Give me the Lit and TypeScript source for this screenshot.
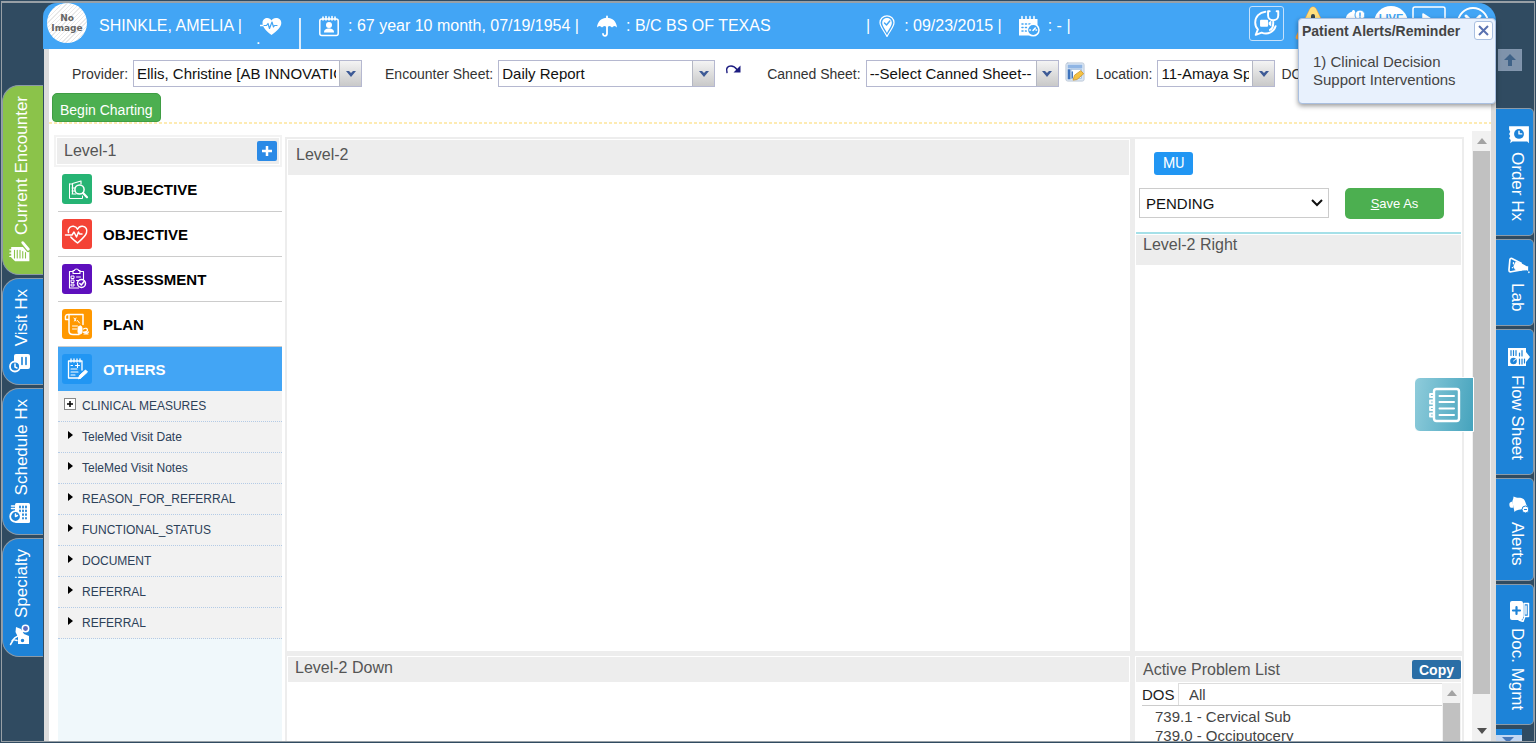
import { LitElement, html, css, svg, type TemplateResult } from "lit";
import { customElement, state } from "lit/decorators.js";
import { classMap } from "lit/directives/class-map.js";

const icon = (size: number, box: number, body: unknown) => html`
  <svg width=${size} height=${size} viewBox="0 0 ${box} ${box}" fill="none" stroke="currentColor"
    stroke-width="1.5" stroke-linecap="round" stroke-linejoin="round" aria-hidden="true">${body}</svg>`;

const ICONS: Record<string, TemplateResult> = {
  heart: icon(22, 22, svg`
    <path d="M11.500 20 C6 16 2.500 12 2.500 8 C2.500 4.800 4.800 3 7.300 3 C9.200 3 10.700 4 11.500 5.500 C12.300 4 13.800 3 16 3 C19 3 21.300 4.800 21.300 8 C21.300 12 17 16 11.500 20Z" fill="currentColor" stroke="none"/>
    <path d="M2.500 10.500 H6.500 L8 8.500 L9.500 13.500 L12 7 L13.500 12 L14.500 10.500 H17" stroke="#42a5f5" stroke-width="1.200"/>
    <path d="M0 10.500H3" stroke-width="1.300"/>`),
  person: icon(22, 22, svg`
    <rect x="1.800" y="4" width="18.400" height="16.600" rx="2"/>
    <path d="M5 2v3M8 1.500v3.500M11 2v3M14 1.500v3.500M17 2v3" stroke-width="1.600"/>
    <circle cx="11" cy="10" r="3" fill="currentColor" stroke="none"/>
    <path d="M6 17.500c0-3 2-4 5-4s5 1 5 4z" fill="currentColor" stroke="none"/>`),
  umbrella: icon(22, 22, svg`
    <path d="M1 12.500 C1.500 6.500 5.500 2.800 11 2.800 C16.500 2.800 20.500 6.500 21 12.500 C19.500 10.500 17.500 10.500 16 12.500 C14.500 10.500 12.500 10.500 11 12.500 C9.500 10.500 7.500 10.500 6 12.500 C4.500 10.500 2.500 10.500 1 12.500Z" fill="currentColor" stroke="none"/>
    <path d="M11 1.500V18.500c0 3-4 3-4 .3" stroke-width="1.800"/>`),
  pin: icon(22, 22, svg`
    <path d="M11 21.500 C8 15.500 4 12 4 7.600 C4 3.800 7.200 .8 11 .8 C14.800 .8 18 3.800 18 7.600 C18 12 14 15.500 11 21.500Z" stroke-width="1.200"/>
    <path d="M11 18 C9 13.500 6.200 11 6.200 7.700 C6.200 5 8.400 3 11 3 C13.600 3 15.800 5 15.800 7.700 C15.800 11 13 13.500 11 18Z" fill="currentColor" stroke="none"/>
    <path d="M8.500 8l2 2L13.800 6" stroke="#42a5f5" stroke-width="1.400"/>`),
  calendar: icon(22, 22, svg`
    <path d="M1 4h18.500v6H12v10.500H1z" fill="currentColor" stroke="none"/>
    <path d="M4 1.500v3M8 1.500v3M12 1.500v3M16 1.500v3"/>
    <path d="M4 9h1M7.500 9h1M11 9h1M4 12.500h1M7.500 12.500h1M4 16h1M7.500 16h1" stroke="#42a5f5" stroke-width="1.600"/>
    <circle cx="15.200" cy="15" r="5.800" fill="#42a5f5"/>
    <path d="M15 15.500l2.300-2.500M11.800 15h.6M18 15h.6"/>`),
  steth: icon(30, 28, svg`
    <path d="M12.500 3.500 C7 4 3 8 3 13.500 C3 16 4 18.500 5.500 20 L3.500 25 L9 23 C15 25.500 20.500 22 22 17" stroke-width="1.800"/>
    <path d="M16.500 3h-1.500v4c0 6 9.500 6 9.500 0v-4h-1.500M19.800 12v2.500c0 3-1 5-3 6" stroke-width="1.800"/>
    <rect x="7.500" y="11" width="7.500" height="6.500" rx="1" fill="currentColor" stroke="none"/>
    <path d="M15.500 13.500l2.500-1.800v5.600l-2.500-1.800z" fill="currentColor" stroke="none"/>`),
  warning: icon(36, 36, svg`
    <path d="M18 1.500 C19.500 1.500 20.500 2.500 21.500 4 L35 31 C36 33 35 34.500 33 34.500 H3 C1 34.500 0 33 1 31 L14.500 4 C15.500 2.500 16.500 1.500 18 1.500Z" fill="#f7a23b" stroke="none"/>
    <path d="M18 2 C19.500 2 20.500 3 21 4 L31 25 H5 L15 4 C15.500 3 16.500 2 18 2Z" fill="#ffdf7e" stroke="none"/>
    <path d="M18 11v10M18 27v.5" stroke="#37474f" stroke-width="4"/>`),
  bell: icon(24, 24, svg`
    <path d="M1 18c3.500-2 2-7 4-10C6.500 6 8.500 5 10 4.800C10 2.500 13 2.500 13 4.800C16 6 17 9 17 12C17 14.500 18.500 16 20 18zM8 19.500h6c-.5 3-5.500 3-6 0z" fill="currentColor" stroke="none"/>
    <circle cx="18" cy="8" r="5" fill="currentColor" stroke="#42a5f5" stroke-width="1"/>
    <path d="M18 6v2.500M18 10v.2" stroke="#42a5f5"/>`),
  play: icon(34, 34, svg`<rect x="1" y="1" width="32" height="32" rx="2" stroke-width="1.500"/>
    <path d="M11 8l14 9-14 9z" fill="currentColor"/>`),
  closeRound: icon(34, 34, svg`<circle cx="17" cy="17" r="15" stroke-width="2"/>
    <path d="M10 10l14 14M24 10L10 24" stroke-width="3"/>`),
  notes: icon(22, 20, svg`
    <path d="M2 5.500h13l3.500 3v10H5.500L2 15z" fill="currentColor" stroke="none"/>
    <path d="M5 8.500v7M7.500 8.500v7M10 8.500v7M12.500 9.500v6M15 10.500v5" stroke="#8bc34a" stroke-width="1"/>
    <path d="M11.500 1l6 7" stroke="#8bc34a" stroke-width="4"/>
    <path d="M12.500 1.500l5 6" stroke-width="2.500"/>
    <path d="M.8 8h2M.8 11h2M.8 14h2" stroke-width="1.200"/>`),
  visit: icon(22, 22, svg`
    <rect x="5" y="2" width="16" height="15" rx="2" fill="currentColor" stroke="none"/>
    <path d="M13 5.500v7M17 5.500v7" stroke="#1d83d8" stroke-width="1.600"/>
    <circle cx="6" cy="14.500" r="5" fill="#1d83d8" stroke-width="1.800"/><path d="M6 12v3l2 1"/>`),
  schedule: icon(22, 22, svg`
    <rect x="6" y="1" width="15" height="20" rx="1.500" fill="currentColor" stroke="none"/>
    <path d="M11 4.500v12M14 4.500v12M17 4.500v12" stroke="#1d83d8" stroke-width="1.800" stroke-dasharray="1 2.800"/>
    <circle cx="6.500" cy="14.500" r="5.300" fill="#1d83d8" stroke-width="1.800"/><path d="M6.500 12V14.500L8.500 13.500M2.500 6.500h3M2.500 4h3"/>`),
  specialty: icon(22, 22, svg`
    <circle cx="16.500" cy="4.500" r="3.200" fill="#5c6bc0" stroke="currentColor"/>
    <path d="M7 3l5 2 3 5 5 2v8H9v-7L6.500 8z" fill="currentColor" stroke="none"/>
    <circle cx="13.500" cy="16.500" r="2.500" fill="#1d83d8"/>
    <path d="M1.500 20.500l3-5 3.500 1M3 17c2-3 3-4 6-5M11 9l3-2" />`),
  orders: icon(22, 20, svg`
    <path d="M1 2h18v15.500l-1.500-1.500H4l-2 1.500.5-3L1 13l1-2-1-2 1-2-1-2z" fill="currentColor" stroke="none"/>
    <circle cx="10" cy="9" r="4.500" fill="#1d83d8" stroke="none"/><path d="M10 6.500V9h2.500" stroke-width="1.300"/>`),
  lab: icon(22, 20, svg`
    <path d="M12 7.500L3.500 3.200C2.500 2.800 1.800 3.500 1.700 4.500L.9 13.500C.8 15 1.500 15.500 3 15.200L12 13.500" stroke-width="1.500"/>
    <path d="M7 6l5 1.500 5.500 3 .8-.8v5l-1-.8-6 .4-5-.8-1.500-3z" fill="currentColor" stroke="none"/>
    <path d="M5 7v1M4 11.500h.2M19 15.500v.5" stroke-width="1.300"/>`),
  flow: icon(24, 24, svg`
    <path d="M1 3h18v4l4 5-4 5v4H1z" fill="currentColor" stroke="none"/>
    <path d="M4 5.500v5M6.500 5.500v5M9 5.500v5M12.500 8v3M15 5.500v5.500M12.500 14v5M15 14v5M17.500 14v4" stroke="#1d83d8" stroke-width="1.200"/>
    <circle cx="6.500" cy="16" r="3.300" fill="#1d83d8" stroke="none"/><path d="M6.500 16l2.300-2" stroke-width="1"/>`),
  alerts: icon(22, 22, svg`
    <path d="M5.500 2.500c0 3-1.500 4-1 6l2 9.500c1.500-2 3.500-2 6-2.500 3-.5 4-1 6.500-.5l1.500-1.500c-3-2-2.500-6-5-8.500C13 3 9 4.500 5.500 2.500z" fill="currentColor" stroke="none"/>
    <path d="M4.500 7.500C2 8 .8 9 1.500 12c.7 2 2 2 4 1.500z" fill="currentColor" stroke="none"/>
    <circle cx="17.500" cy="15.500" r="3.500" fill="currentColor" stroke="#1d83d8" stroke-width="1"/><path d="M16.500 15.500h2" stroke="#1d83d8" stroke-width="1.200"/>`),
  docs: icon(22, 22, svg`
    <rect x="2" y="1" width="13" height="19" rx="2" fill="currentColor" stroke="none"/>
    <path d="M8.500 7v7M5 10.500h7" stroke="#1d83d8" stroke-width="2.200"/>
    <path d="M16 3.500h4.500v13H16zM18 6v8M11 20l4 1.500 1.500-4"/>`),
  subjective: icon(30, 30, svg`
    <path d="M10.500 9.500L19 7v3M7.500 10h3v9.500" stroke-width="1.200"/>
    <path d="M7.500 10v14.500h13v-2.500M10 14h2.500M10 17h2.500M10 20h4" stroke-width="1"/>
    <circle cx="17.500" cy="15.500" r="4.600" stroke-width="1.500"/><path d="M21 19l4 4.200" stroke-width="2.200"/>`),
  objective: icon(30, 30, svg`
    <path d="M6.500 13.500C5.500 9 9 6.800 11.500 7.200C13.500 7.500 15 8.800 15.500 10.200C16.500 8.200 18.500 7 20.500 7.200C24 7.600 25.500 10.500 24.500 13.800C23.500 17.500 19 21 15.500 24C13 22 10.500 20 8.800 18" stroke-width="1.500"/>
    <path d="M3.500 16h6.500l2-3 2.500 5 2-5 1 2h2.500" stroke-width="1.500"/>`),
  assessment: icon(30, 30, svg`
    <path d="M11 7.500H7.500v16.500h9M18 7.500h3.500v8" stroke-width="1.100"/><path d="M11 6.500h1.500c0-2 4-2 4 0H18v3h-7z" stroke-width="1.100"/>
    <path d="M9.500 12h2.500v2.500H9.500zM9.500 16h2.500v2.500H9.500zM9.500 20h2.500v2H9.500zM14.500 13h4M14.500 16.500h2" stroke-width="1"/>
    <circle cx="19.500" cy="19.500" r="4"/><path d="M17.800 19.500l1.500 1.500 3-3.800"/>`),
  plan: icon(30, 30, svg`
    <path d="M7 10.500H3.500c-.8-6 2-5 4-5h13.500v10M7 6v16c0 3 2 3.500 4 3.500h6" stroke-width="1.500"/>
    <path d="M12 9l2 3M14 9l-1.500 3M15.500 11.500l2 2.500M10.500 17h5M10.500 20h4" stroke-width="1"/>
    <rect x="16" y="17" width="4" height="8" rx="2" fill="currentColor" stroke-width="1"/><path d="M21.500 20c2-1.500 4-.5 4 1s-2 2-4 2 4 2 5 0M22 25h4" stroke-width="1.200"/>`),
  others: icon(30, 30, svg`
    <path d="M18.500 24H6.500V7h13.500v9M9 5v3M12 5v3M15 5v3M18 5v3" stroke-width="1.300"/>
    <path d="M15.500 9.500v4M13.500 11.500h4M9 11.500h1.500M9 15h6M9 18h7M9 21h4" stroke-width="1.100"/>
    <path d="M16.500 24.500l1-3 6-5.500 2 2-6 5.500z" fill="currentColor" stroke-width="1"/>`),
  edit: icon(20, 22, svg`
    <rect x="1" y="1" width="20" height="20" rx="2" fill="#dbe7f4" stroke="#b9c6d6" stroke-width="1"/>
    <path d="M3 3h16v4H3z" fill="#8fb5e4" stroke="none"/><path d="M3 8h3v11H3z" fill="#3d73bd" stroke="none"/>
    <path d="M7 8h11v10H7z" fill="#fff" stroke="#9db9db" stroke-width="1"/><path d="M8 11v6" stroke="#3d73bd"/>
    <path d="M9 19.500l1.500-5 7-5 3 3.500-7 6z" fill="#f5c242" stroke="#d09a35" stroke-width="1"/>`),
  redo: icon(18, 18, svg`<path d="M3 10.500C1.500 6 4 4 7 4c3 0 4.500 1.500 6 3.500" stroke="#1c1c80" stroke-width="1.500"/>
    <path d="M16.500 3.500v7h-7z" fill="#1c1c80" stroke="none"/>`),
  notebook: icon(38, 38, svg`
    <rect x="9" y="3" width="25" height="32" rx="2.500" stroke-width="2.400"/>
    <path d="M14.500 10h14.500M14.500 16h14.500M14.500 22.500h14.500M14.500 29h14.500" stroke-width="2"/>
    <path d="M9 8H5v3h4M9 14.500H5v3h4M9 21H5v3h4M9 27.500H5v3h4" stroke-width="1.800"/>`),
};

const chevron = html`<svg width="12" height="10" viewBox="0 0 12 10" aria-hidden="true">
  <path d="M1 2h3l2 2 2-2h3L6 8z" fill="#3d5a96" /></svg>`;
const arrowUp = html`<svg width="10" height="6" viewBox="0 0 10 6" aria-hidden="true"><path d="M5 0l5 6H0z" fill="#a3a3a3"/></svg>`;
const arrowDown = html`<svg width="10" height="6" viewBox="0 0 10 6" aria-hidden="true"><path d="M0 0h10L5 6z" fill="#505050"/></svg>`;

const LEFT_TABS = [
  { label: "Current Encounter", icon: "notes", current: true },
  { label: "Visit Hx", icon: "visit", current: false },
  { label: "Schedule Hx", icon: "schedule", current: false },
  { label: "Specialty", icon: "specialty", current: false },
];
const RIGHT_TABS = [
  { label: "Order Hx", icon: "orders" },
  { label: "Lab", icon: "lab" },
  { label: "Flow Sheet", icon: "flow" },
  { label: "Alerts", icon: "alerts" },
  { label: "Doc. Mgmt", icon: "docs" },
];
const SECTIONS = ["subjective", "objective", "assessment", "plan", "others"];
const OTHER_ITEMS = [
  "CLINICAL MEASURES", "TeleMed Visit Date", "TeleMed Visit Notes", "REASON_FOR_REFERRAL",
  "FUNCTIONAL_STATUS", "DOCUMENT", "REFERRAL", "REFERRAL",
];
const PROBLEMS = ["739.1 - Cervical Sub", "739.0 - Occiputocery"];

@customElement("side-tabs")
class SideTabs extends LitElement {
  static properties = { side: { type: String }, tabs: { attribute: false } };
  declare side: "left" | "right";
  declare tabs: { label: string; icon: string; current?: boolean }[];

  static styles = css`
    :host { display: block; }
    .tabs { display: flex; flex-direction: column; gap: 3px; }
    .tab {
      display: flex; flex-direction: column; align-items: center; box-sizing: border-box; width: 100%;
      margin: 0; border: 1px solid #8b9aa8; background: #1d83d8; color: #fff; cursor: pointer;
      font: 17px/20px "Liberation Sans", Arial, sans-serif;
    }
    .left .tab { padding: 10px 6px 10px 0; gap: 6px; border-right: 0; border-radius: 17px 0 0 17px; }
    .right .tab { padding: 15px 0 14px 9px; gap: 6px; border-left: 0; border-radius: 0 5px 5px 0; }
    .left .current { background: #8bc34a; padding-bottom: 11px; }
    .label { writing-mode: vertical-rl; white-space: nowrap; }
    .left .label { transform: rotate(180deg); margin-left: 4px; }
    .right .label { margin-right: 4px; }
    svg { display: block; }
  `;

  render() {
    return html`<div class="tabs ${this.side}">
      ${this.tabs.map((t) => {
        const label = html`<span class="label">${t.label}</span>`;
        return html`<button class=${classMap({ tab: true, current: !!t.current })} type="button">
          ${this.side === "left" ? [label, ICONS[t.icon]] : [ICONS[t.icon], label]}
        </button>`;
      })}
    </div>`;
  }
}

@customElement("app-root")
class AppRoot extends LitElement {
  @state() private alertOpen = true;

  static styles = css`
    :host {
      display: block; height: 100vh; box-sizing: border-box; padding: 1px; overflow: hidden;
      background: #304b61; font: 15px/18px "Liberation Sans", Arial, sans-serif; color: #333;
    }
    button, select, input { font-family: inherit; }
    button { cursor: pointer; }
    svg { display: block; flex: none; }
    .shell {
      position: relative; display: grid; grid-template-columns: 41px minmax(0, 1fr) 38px;
      height: 100%; box-sizing: border-box; border: 1px solid #98a0a6; border-top-width: 2px;
    }
    .rail-left { padding-top: 82px; }
    .rail-right { display: flex; flex-direction: column; padding-top: 46px; min-height: 0; overflow: hidden; }
    .to-top {
      display: grid; place-items: center; width: 24px; height: 22px; margin: 0 0 37px 2px; padding: 0;
      flex: none; border: 1px solid #8296ad; background: #7f93ab;
    }
    .more {
      display: flex; align-items: flex-end; flex: none; height: 14px; margin: 4px 12px 0 0; padding: 0 0 0 6px;
      border: 0; border-top: 6px solid #1d83d8; background: #c3d7f2; box-sizing: border-box;
    }
    .main { display: flex; flex-direction: column; min-width: 0; min-height: 0; }

    /* patient bar */
    .patient {
      display: flex; align-items: center; flex: none; height: 46px; padding: 0 6px 0 4px; box-sizing: border-box;
      border-radius: 14px 18px 0 0; background: #42a5f5; color: #fff; font-size: 16px; line-height: 20px;
      white-space: nowrap;
    }
    .avatar {
      display: flex; flex-direction: column; justify-content: center; width: 40px; height: 40px; flex: none;
      margin: 0 12px 6px 0; border-radius: 50%; text-align: center; color: #666;
      background: repeating-linear-gradient(135deg, #fff 0 2px, #e9e9e9 2px 3px);
      font: bold 9px/10px "DejaVu Sans", sans-serif;
    }
    .field { display: flex; align-items: center; flex: none; }
    .identity { width: 200px; align-self: stretch; }
    .identity .dot { align-self: flex-end; width: 4px; }
    .name { margin-right: 14px; }
    .rule { align-self: flex-end; width: 2px; height: 31px; background: #dcecfb; flex: none; }
    .demo { margin-left: 17px; gap: 8px; }
    .cover { flex: 0 1 270px; min-width: 0; margin-left: 17px; gap: 8px; }
    .since { gap: 6px; }
    .next { margin-left: 16px; gap: 8px; }
    .tools { display: flex; align-items: center; margin-left: auto; padding-bottom: 6px; }
    .tool { display: grid; place-items: center; padding: 0; border: 0; background: none; color: #fff; }
    .boxed { width: 35px; height: 35px; margin-right: 11px; border: 1px solid #c5e1fb; border-radius: 3px; }
    .warn { margin-right: 11px; }
    .bell { margin: 0 8px 8px 0; }
    .live {
      width: 34px; height: 34px; margin-right: 4px; border-radius: 50%; background: #fff; color: #42a5f5;
      font-size: 11px; line-height: 12px; font-weight: bold; align-content: start; padding-top: 6px;
    }
    .play { margin-right: 10px; }

    /* workspace */
    .work {
      display: flex; flex-direction: column; flex: 1; min-height: 0; margin-left: 1px; background: #fff;
      border: solid #dcdcdc; border-width: 0 5px;
    }
    .filters { padding: 11px 0 0 3px; overflow: hidden; }
    .dots { height: 2px; flex: none; background: repeating-linear-gradient(90deg, #fdebb3 0 3px, #fff 3px 5px); }
    .row { display: flex; align-items: center; padding-left: 20px; white-space: nowrap; font-size: 14px; }
    .row label { margin-right: 5px; flex: none; }
    .combo { display: grid; grid-template-columns: minmax(0, 1fr) 22px; height: 27px; box-sizing: border-box;
      border: 1px solid #b5b8d0; background: #fff; flex-shrink: 1; min-width: 0; }
    .combo select {
      grid-area: 1 / 1; min-width: 0; width: 100%; appearance: none; border: 0; margin: 0; padding: 0 3px 1px;
      background: none; color: #111; font-size: 15px; text-overflow: clip; overflow: hidden;
    }
    .combo .drop { display: grid; place-items: center; border-left: 1px solid #b5b8c4; pointer-events: none;
      background: linear-gradient(#f4f4f4, #dedede 50%, #c9c9c9); }
    .provider { flex-basis: 229px; margin-right: 23px; }
    .encounter { flex-basis: 217px; }
    .canned { flex-basis: 193px; }
    .location { flex-basis: 118px; margin-right: 6px; }
    .icon-btn { padding: 0; border: 0; background: none; flex: none; }
    .redo { margin: 0 25px 6px 9px; }
    .edit { margin: 0 11px 4px 6px; }
    .begin {
      display: block; height: 29px; margin-top: 6px; padding: 4px 7px 0; border: 1px solid #3f9d44;
      border-radius: 5px 5px 4px 4px; background: #4caf50; color: #fff; font-size: 14px;
    }
    .board { display: flex; flex: 1; min-height: 0; padding-top: 7px; }
    .level1 { display: flex; flex-direction: column; flex: none; width: 228px; margin: 4px 3px 0 5px; }
    .l1-head {
      display: flex; align-items: center; justify-content: space-between; flex: none; height: 32px;
      box-sizing: border-box; padding: 0 3px 0 8px; background: #ededed; border: 2px solid #f3f3f3;
      box-shadow: inset 0 0 0 1px #fff;
    }
    .head { font-size: 16px; line-height: 20px; font-weight: normal; margin: 0; color: #555; }
    .add { display: grid; place-items: center; width: 20px; height: 20px; padding: 0; border: 0; border-radius: 2px; background: #2b8ae6; }
    .l1-list { display: flex; flex-direction: column; flex: 1; min-height: 0; margin-left: 4px; background: #f0f8fb; }
    .section {
      display: flex; align-items: center; gap: 11px; height: 45px; flex: none; box-sizing: border-box; padding: 0 4px;
      border: 0; border-bottom: 1px solid #ccc; background: #fff; color: #000; font-size: 15px; font-weight: bold;
    }
    .section.open { background: #42a5f5; color: #fff; border: 0; height: 44px; }
    .badge { border-radius: 3px; color: #fff; }
    .subjective { background: #26b474; } .objective { background: #f44336; } .assessment { background: #5e10bd; }
    .plan { background: #ff9800; } .others { background: #2196f3; }
    .items { list-style: none; margin: 0; padding: 0; }
    .item {
      display: flex; align-items: center; height: 31px; box-sizing: border-box; border-bottom: 1px dotted #b4cbe6;
      background: #f2f2f2;
    }
    .item a { color: #2c4159; font-size: 12px; line-height: 16px; text-decoration: none; }
    .mark { display: grid; place-items: center; width: 24px; height: 18px; margin-bottom: 4px; flex: none; }

    .panes {
      display: grid; flex: 1; min-width: 0; min-height: 0; margin: 6px 8px 0 0; background: #ededed;
      grid-template-columns: minmax(0, 1fr) 327px; grid-template-rows: minmax(0, 1fr) 85px;
      gap: 5px; padding: 2px 2px 0 2px;
    }
    .pane { background: #fff; min-width: 0; min-height: 0; overflow: hidden; padding: 1px; }
    .bar { display: flex; align-items: center; box-sizing: border-box; height: 25px; padding: 0 0 0 7px; background: #ededed; }
    .tall { height: 35px; padding: 0 0 6px 8px; }
    .down { padding-bottom: 4px; }
    .actions { border-bottom: 2px solid #a5e0e8; padding: 12px 0 13px 3px; margin-bottom: 1px; }
    .mu { display: block; height: 23px; margin: 0 0 13px 15px; padding: 0 9px; border: 0; border-radius: 3px;
      background: #2196f3; color: #fff; font: 14px/23px Roboto, sans-serif; }
    .save-row { display: flex; gap: 16px; height: 31px; padding-right: 17px; }
    .status { display: grid; flex: 1; height: 30px; border: 1px solid #ccc; box-sizing: border-box; align-items: center; }
    .status select { grid-area: 1 / 1; height: 28px; appearance: none; border: 0; background: none; padding: 0 6px; font-size: 15px; color: #111; }
    .status svg { grid-area: 1 / 1; justify-self: end; margin-right: 5px; pointer-events: none; }
    .save { width: 99px; border: 0; border-radius: 5px; background: #4caf50; color: #fff; font-size: 13px; padding: 0; }
    .right-head { height: 30px; padding: 0 0 10px 7px; }
    .problems { justify-content: space-between; }
    .copy { height: 19px; padding: 0 7px; border: 0; border-radius: 2px; background: #2a6ea6; color: #fff; font-size: 14px; font-weight: bold; }
    .problem-body { display: flex; margin-top: 1px; }
    .problem-list { flex: 1; min-width: 0; padding-left: 6px; }
    .dos { display: flex; align-items: center; border-bottom: 1px solid #ccc; height: 22px; }
    .dos label { width: 36px; color: #222; padding-top: 2px; }
    .dos input { flex: 1; min-width: 0; height: 100%; box-sizing: border-box; border: solid #ddd; border-width: 1px 0 0 1px; padding: 0 10px; font-size: 15px; color: #444; background: #fff; }
    .codes { list-style: none; margin: 1px 0 0; padding: 0 0 0 13px; line-height: 19px; color: #444; }
    .scroll { display: flex; flex-direction: column; flex: none; width: 19px; padding: 0 1px; box-sizing: border-box; background: #f1f1f1; }
    .scroll .end { display: grid; place-items: center; height: 20px; flex: none; padding: 0; border: 0; background: none; }
    .scroll .thumb { background: #c1c1c1; }
    .page-scroll .thumb { flex: 20; }
    .page-scroll .rest { flex: 1; }
    .list-scroll { height: 80px; }
    .list-scroll .thumb { flex: 1; }

    /* floating layers */
    .notebook {
      position: absolute; top: 374px; right: 60px; display: grid; place-items: center; width: 60px; height: 55px;
      padding: 0; border: 1px solid #fff; border-radius: 6px 0 0 6px; color: #fff;
      background: linear-gradient(100deg, #8fccdb, #45a3bd);
    }
    .alert {
      position: absolute; top: 15px; right: 38px; width: 198px; height: 86px; box-sizing: border-box;
      border: 1px solid #a9bfe0; border-radius: 4px; background: #e8f1fd; box-shadow: 0 2px 5px rgba(0, 0, 0, 0.4);
      padding: 2px 2px 0 3px; color: #444;
    }
    .alert-head { display: flex; align-items: center; justify-content: space-between; font-size: 14px; white-space: nowrap; }
    .alert-head h2 { margin: 0; font-size: 14px; line-height: 18px; }
    .alert-close { display: grid; place-items: center; width: 19px; height: 19px; padding: 0; border: 1px solid #a9bfe0; border-radius: 3px; background: #fff; }
    .alert p { margin: 13px 10px 0 11px; line-height: 18px; }
  `;

  private combo(id: string, cls: string, value: string) {
    return html`<span class="combo ${cls}">
      <select id=${id}><option>${value}</option></select>
      <span class="drop">${chevron}</span>
    </span>`;
  }

  private patientBar() {
    return html`<header class="patient">
      <div class="avatar" role="img" aria-label="No Image"><span>No</span><span>Image</span></div>
      <div class="field identity">
        <span class="name">SHINKLE, AMELIA |</span><span class="dot">.</span>${ICONS.heart}
      </div>
      <span class="rule"></span>
      <div class="field demo">${ICONS.person}<span>: 67 year 10 month, 07/19/1954 |</span></div>
      <div class="field cover">${ICONS.umbrella}<span>: B/C BS OF TEXAS</span></div>
      <div class="field since"><span>|</span>${ICONS.pin}<span>: 09/23/2015 |</span></div>
      <div class="field next">${ICONS.calendar}<span>: - |</span></div>
      <div class="tools">
        <button class="tool boxed" type="button" aria-label="Telehealth">${ICONS.steth}</button>
        <button class="tool warn" type="button" aria-label="Warnings">${ICONS.warning}</button>
        <button class="tool bell" type="button" aria-label="Notifications">${ICONS.bell}</button>
        <button class="tool live" type="button">LIVE</button>
        <button class="tool play" type="button" aria-label="Play">${ICONS.play}</button>
        <button class="tool" type="button" aria-label="Close chart">${ICONS.closeRound}</button>
      </div>
    </header>`;
  }

  private filters() {
    return html`<div class="filters">
      <div class="row">
        <label for="provider">Provider:</label>${this.combo("provider", "provider", "Ellis, Christine [AB INNOVATIONS]")}
        <label for="encounter">Encounter Sheet:</label>${this.combo("encounter", "encounter", "Daily Report")}
        <button class="icon-btn redo" type="button" aria-label="Reload sheet">${ICONS.redo}</button>
        <label for="canned">Canned Sheet:</label>${this.combo("canned", "canned", "--Select Canned Sheet--")}
        <button class="icon-btn edit" type="button" aria-label="Edit sheet">${ICONS.edit}</button>
        <label for="location">Location:</label>${this.combo("location", "location", "11-Amaya Sp")}
        <span>DOS:</span>
      </div>
      <button class="begin" type="button">Begin Charting</button>
    </div>
    <div class="dots"></div>`;
  }

  private levelOne() {
    return html`<nav class="level1" aria-label="Level-1">
      <div class="l1-head">
        <h2 class="head">Level-1</h2>
        <button class="add" type="button" aria-label="Add">
          <svg width="12" height="12" viewBox="0 0 12 12"><path d="M6 1v10M1 6h10" stroke="#fff" stroke-width="2.500"/></svg>
        </button>
      </div>
      <div class="l1-list">
        ${SECTIONS.map((s) => html`
          <button type="button" class=${classMap({ section: true, open: s === "others" })}>
            <span class="badge ${s}">${ICONS[s]}</span>${s.toUpperCase()}
          </button>`)}
        <ul class="items">
          ${OTHER_ITEMS.map((label, i) => html`<li class="item">
            <span class="mark">${i === 0
              ? html`<svg width="12" height="12" viewBox="0 0 12 12"><rect x="0.500" y="0.500" width="11" height="11" fill="#fff" stroke="#888"/><path d="M6 3v6M3 6h6" stroke="#000" stroke-width="1.500"/></svg>`
              : html`<svg width="5" height="8" viewBox="0 0 5 8"><path d="M0 0l5 4-5 4z" fill="#000"/></svg>`}</span>
            <a href="#">${label}</a>
          </li>`)}
        </ul>
      </div>
    </nav>`;
  }

  private panes() {
    return html`<div class="panes">
      <section class="pane"><div class="bar tall"><h2 class="head">Level-2</h2></div></section>
      <section class="pane">
        <div class="actions">
          <button class="mu" type="button">MU</button>
          <div class="save-row">
            <span class="status">
              <select aria-label="Status"><option>PENDING</option></select>
              <svg width="12" height="8" viewBox="0 0 12 8"><path d="M1 1l5 5 5-5" fill="none" stroke="#111" stroke-width="2"/></svg>
            </span>
            <button class="save" type="button"><u>S</u>ave As</button>
          </div>
        </div>
        <div class="bar right-head"><h2 class="head">Level-2 Right</h2></div>
      </section>
      <section class="pane"><div class="bar down"><h2 class="head">Level-2 Down</h2></div></section>
      <section class="pane">
        <div class="bar problems"><h2 class="head">Active Problem List</h2><button class="copy" type="button">Copy</button></div>
        <div class="problem-body">
          <div class="problem-list">
            <div class="dos"><label for="dos">DOS</label><input id="dos" type="text" .value=${"All"} /></div>
            <ul class="codes">${PROBLEMS.map((p) => html`<li>${p}</li>`)}</ul>
          </div>
          <div class="scroll list-scroll"><button class="end" type="button" aria-label="Scroll up">${arrowUp}</button><span class="thumb"></span></div>
        </div>
      </section>
    </div>`;
  }

  render() {
    return html`<div class="shell">
      <side-tabs class="rail-left" side="left" .tabs=${LEFT_TABS}></side-tabs>
      <div class="main">
        ${this.patientBar()}
        <main class="work">
          ${this.filters()}
          <div class="board">
            ${this.levelOne()} ${this.panes()}
            <div class="scroll page-scroll">
              <button class="end" type="button" aria-label="Scroll up">${arrowUp}</button>
              <span class="thumb"></span><span class="rest"></span>
              <button class="end" type="button" aria-label="Scroll down">${arrowDown}</button>
            </div>
          </div>
        </main>
      </div>
      <div class="rail-right">
        <button class="to-top" type="button" aria-label="Back to top">
          <svg width="12" height="12" viewBox="0 0 12 12"><path d="M6 0l6 6H8v6H4V6H0z" fill="#3f6287"/></svg>
        </button>
        <side-tabs side="right" .tabs=${RIGHT_TABS}></side-tabs>
        <button class="more" type="button" aria-label="More tabs">
          <svg width="12" height="6" viewBox="0 0 12 6"><path d="M0 0h12L6 6z" fill="#4a78b8"/></svg>
        </button>
      </div>
      <button class="notebook" type="button" aria-label="Notes">${ICONS.notebook}</button>
      ${this.alertOpen
        ? html`<aside class="alert" role="dialog" aria-labelledby="alert-title">
            <div class="alert-head">
              <h2 id="alert-title">Patient Alerts/Reminder</h2>
              <button class="alert-close" type="button" aria-label="Close" @click=${() => (this.alertOpen = false)}>
                <svg width="11" height="11" viewBox="0 0 11 11"><path d="M1 1l9 9M10 1l-9 9" stroke="#5a72b0" stroke-width="2"/></svg>
              </button>
            </div>
            <p>1) Clinical Decision Support Interventions</p>
          </aside>`
        : null}
    </div>`;
  }
}
